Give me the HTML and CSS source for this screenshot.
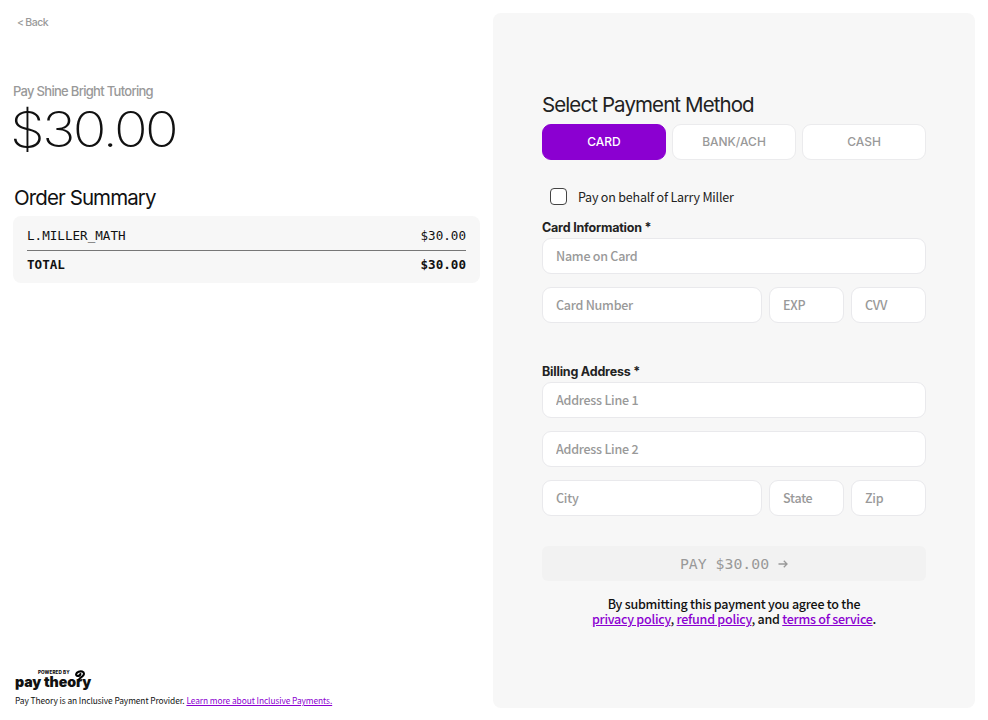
FILE: index.html
```html
<!DOCTYPE html>
<html lang="en">
<head>
    <meta charset="UTF-8">
    <meta name="viewport" content="width=device-width, initial-scale=1.0">
    <title>Pay Shine Bright Tutoring</title>
    <link rel="stylesheet" href="styles.css">
</head>
<body>
<div class="page">
    <div class="summary">
        <a class="back">&lt; Back</a>
        <div class="payee">Pay Shine Bright Tutoring</div>
        <div class="amount">$30.00</div>
        <h2 class="summary-title">Order Summary</h2>
        <div class="order">
            <div class="order-row"><span>L.MILLER_MATH</span><span>$30.00</span></div>
            <div class="order-row total"><span>TOTAL</span><span>$30.00</span></div>
        </div>
        <div class="footer">
            <div class="logo">
                <span class="powered">POWERED BY</span>
                <span class="brand">pay theory</span>
                <svg class="swirl" width="12" height="13" viewBox="0 0 12 13" fill="none" stroke="#000" stroke-width="2.1" stroke-linecap="round">
                    <path d="M5 9.5C5.2 7.6 9.9 6.8 10 3.9C10 1.4 7 .9 4.6 1.7C1.6 2.8 1.4 6 3.6 6C5.2 6 6.2 5 6.4 4"/>
                </svg>
            </div>
            <div class="provider">Pay Theory is an Inclusive Payment Provider. <a class="link">Learn more about Inclusive Payments.</a></div>
        </div>
    </div>
    <div class="panel">
        <h2 class="panel-title">Select Payment Method</h2>
        <div class="tabs">
            <button class="tab active">CARD</button>
            <button class="tab">BANK/ACH</button>
            <button class="tab">CASH</button>
        </div>
        <label class="behalf"><input type="checkbox" class="check"><span>Pay on behalf of Larry Miller</span></label>
        <div class="label">Card Information *</div>
        <div class="fields">
            <input class="field" type="text" placeholder="Name on Card">
            <div class="field-row">
                <input class="field" type="text" placeholder="Card Number">
                <input class="field" type="text" placeholder="EXP">
                <input class="field" type="text" placeholder="CVV">
            </div>
        </div>
        <div class="label billing">Billing Address *</div>
        <div class="fields">
            <input class="field" type="text" placeholder="Address Line 1">
            <input class="field" type="text" placeholder="Address Line 2">
            <div class="field-row">
                <input class="field" type="text" placeholder="City">
                <input class="field" type="text" placeholder="State">
                <input class="field" type="text" placeholder="Zip">
            </div>
        </div>
        <button class="pay" disabled>
            <span>PAY $30.00</span>
            <svg width="10" height="8" viewBox="0 0 10 8" fill="none" stroke="currentColor" stroke-width="1.3">
                <path d="M.5 4H9M5.8 .8L9 4L5.8 7.2"/>
            </svg>
        </button>
        <p class="terms">By submitting this payment you agree to the<br><a class="link">privacy policy</a>, <a class="link">refund policy</a>, and <a class="link">terms of service</a>.</p>
    </div>
</div>
</body>
</html>
```
FILE: styles.css
```css
* {
    box-sizing: border-box;
}
body {
    margin: 0;
    background-color: #fff;
    color: #111;
    font-family: "Noto Sans CJK SC", "Noto Sans", sans-serif;
}
.page {
    display: grid;
    grid-template-columns: 467px 482px;
    gap: 13px;
    height: 720px;
    padding: 13px 13px 12px;
}
.summary {
    display: flex;
    flex-direction: column;
}
.back {
    margin: 1px 0 0 4px;
    font: 500 10.5px/18px Inter, sans-serif;
    letter-spacing: -0.5px;
    word-spacing: -0.5px;
    color: #999;
}
.payee {
    margin-top: 50px;
    font: 500 13px/18px Inter, sans-serif;
    letter-spacing: -0.7px;
    color: #999;
}
.amount {
    margin: 1px 0 0 -3px;
    font: 200 48.5px/58px Inter, sans-serif;
    letter-spacing: -2.2px;
    transform: scaleX(1.15);
    transform-origin: left;
}
.summary-title {
    margin: 25px 0 0 1px;
    font: 400 20.5px/28px Inter, sans-serif;
    letter-spacing: -0.9px;
}
.order {
    margin-top: 4px;
    height: 67px;
    padding: 6px 14px;
    border-radius: 8px;
    background-color: #f7f7f7;
    font: 12.6px/28px "DejaVu Sans Mono", monospace;
}
.order-row {
    display: flex;
    justify-content: space-between;
    height: 28px;
}
.total {
    border-top: 1px solid #777;
    font-weight: bold;
}
.footer {
    margin-top: auto;
    padding-left: 2px;
}
.logo {
    position: relative;
    display: flex;
    flex-direction: column;
    width: 78px;
    height: 22px;
}
.powered {
    margin-left: 23px;
    font: 800 4.6px/4px Inter, sans-serif;
    letter-spacing: 0.1px;
}
.brand {
    font: 900 14.2px/14px Inter, sans-serif;
    letter-spacing: -0.1px;
    white-space: nowrap;
}
.swirl {
    position: absolute;
    left: 59px;
    top: -1px;
}
.provider {
    font-size: 8.4px;
    line-height: 15px;
    letter-spacing: -0.08px;
    white-space: nowrap;
}
.link {
    color: #8b00d1;
    text-decoration: underline;
}
.panel {
    padding: 78px 49px 0;
    border-radius: 8px;
    background-color: #f7f7f7;
}
.panel-title {
    margin: 0;
    font: 400 20.5px/28px Inter, sans-serif;
    letter-spacing: -0.9px;
    color: #222;
}
.tabs {
    display: grid;
    grid-template-columns: repeat(3, 1fr);
    gap: 6px;
    margin-top: 5px;
}
.tab {
    height: 36px;
    padding: 0;
    border: 1px solid #ebebed;
    border-radius: 9px;
    background-color: #fff;
    color: #999;
    font: 500 12px/16px Inter, sans-serif;
}
.active {
    border-color: #8b00d1;
    background-color: #8b00d1;
    color: #fff;
}
.behalf {
    display: flex;
    align-items: center;
    gap: 11px;
    height: 18px;
    margin: 27px 0 0 8px;
    font-size: 12.5px;
    letter-spacing: -0.2px;
    color: #222;
}
.check {
    appearance: none;
    width: 17px;
    height: 17px;
    margin: 0;
    border: 1px solid #444;
    border-radius: 4px;
    background-color: #fff;
}
.label {
    margin-top: 13px;
    font: 700 12.5px/20px Inter, sans-serif;
    letter-spacing: -0.2px;
    color: #222;
}
.billing {
    margin-top: 39px;
}
.fields {
    display: flex;
    flex-direction: column;
    gap: 13px;
}
.field-row {
    display: grid;
    grid-template-columns: 1fr 75px 75px;
    gap: 7px;
}
.field {
    width: 100%;
    height: 36px;
    padding: 0 13px 2px;
    border: 1px solid #e9e9ec;
    border-radius: 9px;
    background-color: #fff;
    font: 500 12.5px "Noto Sans CJK SC", sans-serif;
    letter-spacing: -0.25px;
}
.field::placeholder {
    color: #999;
}
.pay {
    display: flex;
    align-items: center;
    justify-content: center;
    gap: 9px;
    width: 100%;
    height: 35px;
    margin-top: 30px;
    border: 0;
    border-radius: 6px;
    background-color: #f2f2f2;
    color: #999;
    font: 14.8px "DejaVu Sans Mono", monospace;
}
.terms {
    margin: 15px 0 0;
    font-size: 12.5px;
    font-weight: 500;
    line-height: 15px;
    letter-spacing: -0.25px;
    text-align: center;
}
```
